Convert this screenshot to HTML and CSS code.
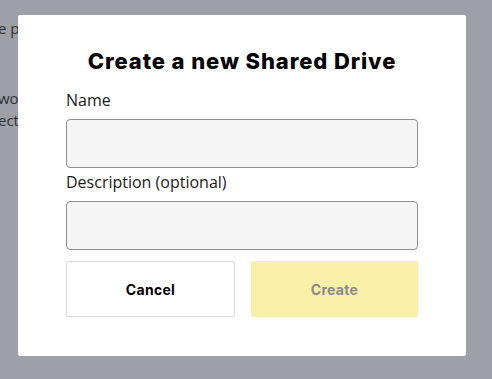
FILE: index.html
```html
<!DOCTYPE html>
<html lang="en">
<head>
  <meta charset="UTF-8">
  <title>Create a new Shared Drive</title>
  <link rel="stylesheet" href="styles.css">
</head>
<body>
  <div class="page">
    <p class="page-line page-line-top">e page</p>
    <p class="page-line page-line-mid">work</p>
    <p class="page-line">ect</p>
  </div>
  <div class="overlay">
    <div class="modal">
      <h2 class="modal-title">Create a new Shared Drive</h2>
      <label class="modal-label" for="drive_name">Name</label>
      <input class="modal-input" id="drive_name" type="text">
      <label class="modal-label modal-label-second" for="drive_desc">Description (optional)</label>
      <input class="modal-input" id="drive_desc" type="text">
      <div class="modal-actions">
        <button class="modal-btn modal-btn-cancel">Cancel</button>
        <button class="modal-btn modal-btn-create" disabled>Create</button>
      </div>
    </div>
  </div>
</body>
</html>
```

FILE: styles.css
```css
* {
  margin: 0;
  padding: 0;
  box-sizing: border-box;
}

body {
  background: #9da0a7;
  font-family: "Open Sans", sans-serif;
  width: 492px;
  height: 379px;
  overflow: hidden;
}

.page {
  padding-top: 17px;
  margin-left: -2px;
  color: #2e3035;
  font-size: 15px;
  line-height: 22px;
}

.page-line-top {
  margin-bottom: 48px;
}

.overlay {
  position: fixed;
  top: 0;
  left: 0;
  width: 492px;
  height: 379px;
  display: flex;
  align-items: flex-start;
  padding: 15px 0 0 18px;
}

.modal {
  width: 448px;
  height: 341px;
  background: #fff;
  border-radius: 2px;
  padding: 32px 48px 0;
  display: flex;
  flex-direction: column;
}

.modal-title {
  font-family: "Inter", sans-serif;
  font-weight: 800;
  font-size: 22px;
  letter-spacing: 0.9px;
  line-height: 28px;
  text-align: center;
  color: #000;
  margin-bottom: 14px;
}

.modal-label {
  font-size: 16px;
  line-height: 22px;
  color: #1a1a1a;
  margin-bottom: 8px;
}

.modal-label-second {
  margin-top: 3px;
}

.modal-input {
  height: 49px;
  background: #f5f5f5;
  border: 1px solid #8f8f8f;
  border-radius: 4px;
  font-family: inherit;
  font-size: 15px;
  padding: 0 12px;
}

.modal-actions {
  display: flex;
  gap: 16px;
  margin-top: 11px;
}

.modal-btn {
  height: 56px;
  border-radius: 2px;
  font-family: "Inter", sans-serif;
  font-weight: 700;
  font-size: 14px;
  letter-spacing: 0.3px;
}

.modal-btn-cancel {
  width: 169px;
  background: #fff;
  border: 1px solid #dcdcdc;
  color: #000;
}

.modal-btn-create {
  flex: 1;
  background: #faefa6;
  border: none;
  color: #8a8a8a;
}
```
